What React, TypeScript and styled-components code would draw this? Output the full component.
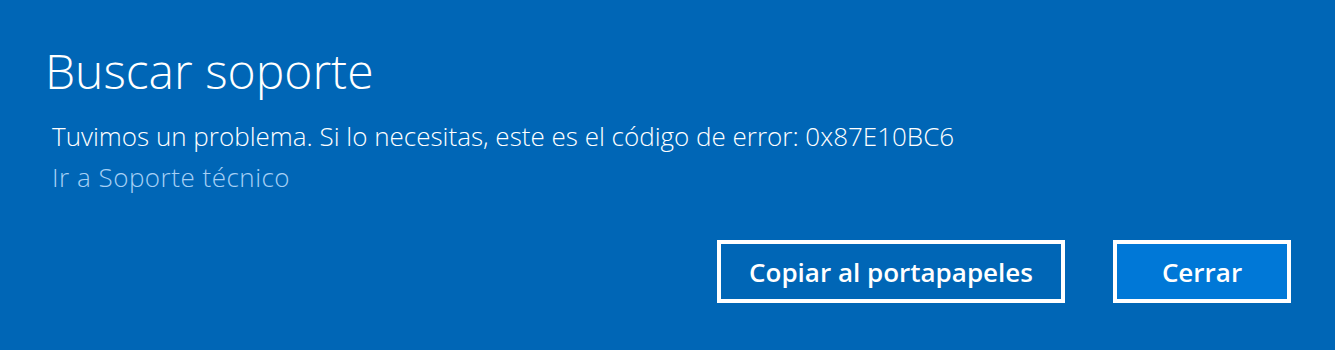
import React from "react";
import styled, { createGlobalStyle } from "styled-components";

const Global = createGlobalStyle`
  html, body { margin: 0; padding: 0; background: #0066b6; }
  * { box-sizing: border-box; }
`;

const Dialog = styled.div`
  width: 1335px;
  height: 350px;
  background: #0066b6;
  color: #ffffff;
  font-family: "Open Sans", "Noto Sans", sans-serif;
  display: flex;
  flex-direction: column;
  padding: 43px 44px 0 45px;
`;

const Title = styled.h1`
  margin: 0;
  font-size: 48px;
  font-weight: 300;
  line-height: 56px;
`;

const Body = styled.div`
  margin-top: 18px;
  padding-left: 7px;
  display: flex;
  flex-direction: column;
`;

const Message = styled.p`
  margin: 0;
  font-size: 26px;
  font-weight: 300;
  line-height: 38px;
  color: #ffffff;
`;

const Link = styled.a`
  margin-top: 5px;
  font-size: 26px;
  font-weight: 300;
  letter-spacing: 0.5px;
  line-height: 34px;
  color: #a6d0f5;
  text-decoration: none;
  cursor: pointer;
`;

const Actions = styled.div`
  margin-top: 46px;
  display: flex;
  justify-content: flex-end;
  gap: 48px;
`;

const Button = styled.button<{ $primary?: boolean }>`
  height: 63px;
  width: ${(p) => (p.$primary ? "178px" : "348px")};
  border: 4px solid #ffffff;
  background: ${(p) => (p.$primary ? "#0078d7" : "transparent")};
  color: #ffffff;
  font-family: "Open Sans", "Noto Sans", sans-serif;
  font-size: 26px;
  font-weight: 600;
  padding: 0;
  cursor: pointer;
`;

export default function App() {
  return (
    <>
      <Global />
      <Dialog>
        <Title>Buscar soporte</Title>
        <Body>
          <Message>
            Tuvimos un problema. Si lo necesitas, este es el código de error: 0x87E10BC6
          </Message>
          <Link>Ir a Soporte técnico</Link>
        </Body>
        <Actions>
          <Button>Copiar al portapapeles</Button>
          <Button $primary>Cerrar</Button>
        </Actions>
      </Dialog>
    </>
  );
}
